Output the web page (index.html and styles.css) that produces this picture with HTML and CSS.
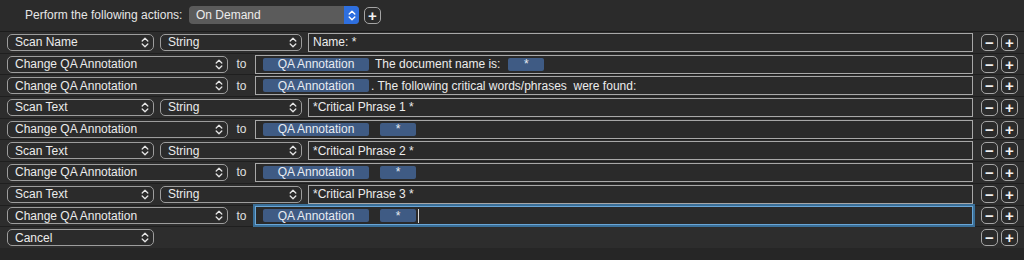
FILE: index.html
```html
<!DOCTYPE html>
<html>
<head>
<meta charset="utf-8">
<link rel="stylesheet" href="styles.css">
</head>
<body>
<div class="win">
  <div class="header">
    <span class="hlabel">Perform the following actions:</span>
    <div class="hpopup"><span class="htext">On Demand</span><span class="hchev"><svg width="8" height="11" viewBox="0 0 8 11"><path d="M1.2 4 L4 1.3 L6.8 4 M1.2 7 L4 9.7 L6.8 7" fill="none" stroke="#fff" stroke-width="1.4" stroke-linecap="round" stroke-linejoin="round"/></svg></span></div>
    <div class="sbtn">+</div>
  </div>
  <div class="rows">
    <div class="row">
      <div class="popup w1"><span>Scan Name</span><svg class="chev" width="8" height="11" viewBox="0 0 8 11"><path d="M1.2 4 L4 1.3 L6.8 4 M1.2 7 L4 9.7 L6.8 7" fill="none" stroke="#e6e6e6" stroke-width="1.3" stroke-linecap="round" stroke-linejoin="round"/></svg></div>
      <div class="popup w2"><span>String</span><svg class="chev" width="8" height="11" viewBox="0 0 8 11"><path d="M1.2 4 L4 1.3 L6.8 4 M1.2 7 L4 9.7 L6.8 7" fill="none" stroke="#e6e6e6" stroke-width="1.3" stroke-linecap="round" stroke-linejoin="round"/></svg></div>
      <div class="field tf">Name: *</div>
      <div class="btns"><div class="sbtn">−</div><div class="sbtn">+</div></div>
    </div>
    <div class="row">
      <div class="popup w3"><span>Change QA Annotation</span><svg class="chev" width="8" height="11" viewBox="0 0 8 11"><path d="M1.2 4 L4 1.3 L6.8 4 M1.2 7 L4 9.7 L6.8 7" fill="none" stroke="#e6e6e6" stroke-width="1.3" stroke-linecap="round" stroke-linejoin="round"/></svg></div>
      <span class="to">to</span>
      <div class="field tk"><span class="token t1">QA Annotation</span><span class="txt">The document name is:</span><span class="token t2 tgap">*</span></div>
      <div class="btns"><div class="sbtn">−</div><div class="sbtn">+</div></div>
    </div>
    <div class="row">
      <div class="popup w3"><span>Change QA Annotation</span><svg class="chev" width="8" height="11" viewBox="0 0 8 11"><path d="M1.2 4 L4 1.3 L6.8 4 M1.2 7 L4 9.7 L6.8 7" fill="none" stroke="#e6e6e6" stroke-width="1.3" stroke-linecap="round" stroke-linejoin="round"/></svg></div>
      <span class="to">to</span>
      <div class="field tk"><span class="token t1">QA Annotation</span><span class="txt tight">. The following critical words/phrases &nbsp;were found:</span></div>
      <div class="btns"><div class="sbtn">−</div><div class="sbtn">+</div></div>
    </div>
    <div class="row">
      <div class="popup w1"><span>Scan Text</span><svg class="chev" width="8" height="11" viewBox="0 0 8 11"><path d="M1.2 4 L4 1.3 L6.8 4 M1.2 7 L4 9.7 L6.8 7" fill="none" stroke="#e6e6e6" stroke-width="1.3" stroke-linecap="round" stroke-linejoin="round"/></svg></div>
      <div class="popup w2"><span>String</span><svg class="chev" width="8" height="11" viewBox="0 0 8 11"><path d="M1.2 4 L4 1.3 L6.8 4 M1.2 7 L4 9.7 L6.8 7" fill="none" stroke="#e6e6e6" stroke-width="1.3" stroke-linecap="round" stroke-linejoin="round"/></svg></div>
      <div class="field tf">*Critical Phrase 1 *</div>
      <div class="btns"><div class="sbtn">−</div><div class="sbtn">+</div></div>
    </div>
    <div class="row">
      <div class="popup w3"><span>Change QA Annotation</span><svg class="chev" width="8" height="11" viewBox="0 0 8 11"><path d="M1.2 4 L4 1.3 L6.8 4 M1.2 7 L4 9.7 L6.8 7" fill="none" stroke="#e6e6e6" stroke-width="1.3" stroke-linecap="round" stroke-linejoin="round"/></svg></div>
      <span class="to">to</span>
      <div class="field tk"><span class="token t1">QA Annotation</span><span class="token t2 tgap2">*</span></div>
      <div class="btns"><div class="sbtn">−</div><div class="sbtn">+</div></div>
    </div>
    <div class="row">
      <div class="popup w1"><span>Scan Text</span><svg class="chev" width="8" height="11" viewBox="0 0 8 11"><path d="M1.2 4 L4 1.3 L6.8 4 M1.2 7 L4 9.7 L6.8 7" fill="none" stroke="#e6e6e6" stroke-width="1.3" stroke-linecap="round" stroke-linejoin="round"/></svg></div>
      <div class="popup w2"><span>String</span><svg class="chev" width="8" height="11" viewBox="0 0 8 11"><path d="M1.2 4 L4 1.3 L6.8 4 M1.2 7 L4 9.7 L6.8 7" fill="none" stroke="#e6e6e6" stroke-width="1.3" stroke-linecap="round" stroke-linejoin="round"/></svg></div>
      <div class="field tf">*Critical Phrase 2 *</div>
      <div class="btns"><div class="sbtn">−</div><div class="sbtn">+</div></div>
    </div>
    <div class="row">
      <div class="popup w3"><span>Change QA Annotation</span><svg class="chev" width="8" height="11" viewBox="0 0 8 11"><path d="M1.2 4 L4 1.3 L6.8 4 M1.2 7 L4 9.7 L6.8 7" fill="none" stroke="#e6e6e6" stroke-width="1.3" stroke-linecap="round" stroke-linejoin="round"/></svg></div>
      <span class="to">to</span>
      <div class="field tk"><span class="token t1">QA Annotation</span><span class="token t2 tgap2">*</span></div>
      <div class="btns"><div class="sbtn">−</div><div class="sbtn">+</div></div>
    </div>
    <div class="row">
      <div class="popup w1"><span>Scan Text</span><svg class="chev" width="8" height="11" viewBox="0 0 8 11"><path d="M1.2 4 L4 1.3 L6.8 4 M1.2 7 L4 9.7 L6.8 7" fill="none" stroke="#e6e6e6" stroke-width="1.3" stroke-linecap="round" stroke-linejoin="round"/></svg></div>
      <div class="popup w2"><span>String</span><svg class="chev" width="8" height="11" viewBox="0 0 8 11"><path d="M1.2 4 L4 1.3 L6.8 4 M1.2 7 L4 9.7 L6.8 7" fill="none" stroke="#e6e6e6" stroke-width="1.3" stroke-linecap="round" stroke-linejoin="round"/></svg></div>
      <div class="field tf">*Critical Phrase 3 *</div>
      <div class="btns"><div class="sbtn">−</div><div class="sbtn">+</div></div>
    </div>
    <div class="row">
      <div class="popup w3"><span>Change QA Annotation</span><svg class="chev" width="8" height="11" viewBox="0 0 8 11"><path d="M1.2 4 L4 1.3 L6.8 4 M1.2 7 L4 9.7 L6.8 7" fill="none" stroke="#e6e6e6" stroke-width="1.3" stroke-linecap="round" stroke-linejoin="round"/></svg></div>
      <span class="to">to</span>
      <div class="field tk focus"><span class="token t1">QA Annotation</span><span class="token t2 tgap2">*</span><span class="caret"></span></div>
      <div class="btns"><div class="sbtn">−</div><div class="sbtn">+</div></div>
    </div>
    <div class="row last">
      <div class="popup w1"><span>Cancel</span><svg class="chev" width="8" height="11" viewBox="0 0 8 11"><path d="M1.2 4 L4 1.3 L6.8 4 M1.2 7 L4 9.7 L6.8 7" fill="none" stroke="#e6e6e6" stroke-width="1.3" stroke-linecap="round" stroke-linejoin="round"/></svg></div>
      <div class="spacer"></div>
      <div class="btns"><div class="sbtn">−</div><div class="sbtn">+</div></div>
    </div>
  </div>
</div>
</body>
</html>
```

FILE: styles.css
```css
* { box-sizing: border-box; }
html, body { margin: 0; padding: 0; }
body {
  width: 1024px;
  height: 260px;
  background: #262626;
  font-family: "Liberation Sans", Arial, sans-serif;
  font-size: 12px;
  color: #e4e4e4;
  overflow: hidden;
}
.win { display: flex; flex-direction: column; }
.header {
  height: 32px;
  background: #2b2b2b;
  display: flex;
  align-items: center;
  padding-left: 25px;
  padding-bottom: 1px;
  border-bottom: 1px solid #1c1c1c;
}
.hlabel { width: 164px; color: #e6e6e6; }
.hpopup {
  width: 170px;
  height: 18px;
  background: #5b5b5b;
  border-radius: 4px;
  display: flex;
  align-items: center;
  overflow: hidden;
}
.htext { flex: 1; padding-left: 7px; color: #ececec; }
.hchev {
  width: 15px;
  height: 18px;
  background: #2e6fdf;
  display: flex;
  align-items: center;
  justify-content: center;
}
.header .sbtn { margin-left: 5px; }
.rows { display: flex; flex-direction: column; }
.row {
  height: 21.7px;
  display: flex;
  align-items: center;
  padding-left: 7px;
  padding-right: 6px;
  background: #2d2d2d;
  border-bottom: 1px solid #1f1f1f;
}
.row.last { border-bottom: none; height: 21px; }
.popup {
  height: 17px;
  border: 1px solid #9d9d9d;
  border-radius: 5px;
  display: flex;
  align-items: center;
  justify-content: space-between;
  padding: 0 4px 0 7px;
  background: #2b2b2b;
  color: #ececec;
}
.w1 { width: 147px; }
.w2 { width: 142px; margin-left: 6px; }
.w3 { width: 221px; }
.chev { display: block; }
.to { width: 27px; text-align: center; color: #e0e0e0; }
.field {
  flex: 1;
  height: 19px;
  border: 1px solid #a8a8a8;
  background: #2a2a2a;
  display: flex;
  align-items: center;
  margin-right: 8px;
}
.tf { margin-left: 6px; padding-left: 4px; color: #ececec; }
.tk { padding-left: 7px; }
.focus {
  border: 1px solid #6aa6d6;
  box-shadow: 0 0 0 2px #3a6f98;
  height: 19px;
}
.token {
  height: 13px;
  background: #3f5b84;
  border-radius: 2px;
  display: flex;
  align-items: center;
  justify-content: center;
  color: #e8ecf2;
}
.t1 { width: 106px; }
.t2 { width: 36px; }
.tgap { margin-left: 0; }
.tgap2 { margin-left: 11px; }
.txt { padding: 0 8px 0 6px; color: #ececec; }
.txt.tight { padding-left: 2px; }
.caret { width: 1px; height: 14px; background: #d8d8d8; margin-left: 2px; }
.spacer { flex: 1; }
.btns { display: flex; gap: 3px; }
.sbtn {
  width: 17px;
  height: 17px;
  border: 1px solid #a5a5a5;
  border-radius: 5px;
  display: flex;
  align-items: center;
  justify-content: center;
  font-size: 15px;
  font-weight: bold;
  color: #f2f2f2;
  line-height: 1;
  background: #2b2b2b;
}
```
